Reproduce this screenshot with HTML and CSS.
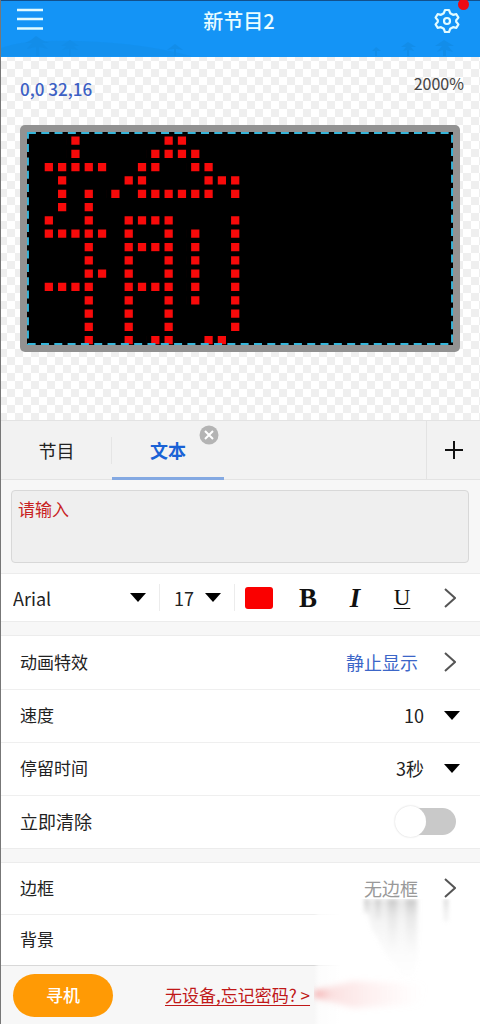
FILE: index.html
```html
<!DOCTYPE html>
<html lang="zh-CN">
<head>
<meta charset="utf-8">
<meta name="viewport" content="width=device-width, initial-scale=1">
<title>新节目2</title>
<link rel="stylesheet" href="styles.css">
</head>
<body>
<div class="app">
  <header class="header">
    <svg class="scenery scenery-left" width="200" height="24" viewBox="0 0 200 24" aria-hidden="true">
      <path d="M0 15Q20 8 45 8Q125 6 190 23H0z" opacity=".6"/>
      <path d="M35 23v-9l-9 2 5-6-7 0 6-3 5-4 6 4 7 3h-7l6 6-9-2v9zM68 23v-7l-7 1 4-4-5 0 9-6 9 6h-5l4 4-7-1v7zM166 17l8-6 8 6-7-1v7h-2v-7z"/>
    </svg>
    <svg class="scenery scenery-right" width="120" height="24" viewBox="0 0 120 24" aria-hidden="true">
      <path d="M12 18l4-4 5 4-4 0v5h-2v-5zM43 18l3-4-5 0 7-5 8 5h-5l3 4-5-1v6h-2v-6zM77 19l5-6-7 0 9-6 10 6h-6l5 6-7-2v6h-3v-6z"/>
    </svg>
    <button class="icon-button" type="button" aria-label="菜单">
      <svg width="28" height="24" viewBox="0 0 28 24"><path d="M1 2h26M1 11h26M1 20.500h26" fill="none" stroke="#e2fbff" stroke-width="2.400"/></svg>
    </button>
    <h1 class="title">新节目2</h1>
    <button class="icon-button settings" type="button" aria-label="设置">
      <svg width="26" height="26" viewBox="0 0 26 26" fill="none" stroke="#e2fbff" stroke-width="2.200" stroke-linejoin="round"><path d="M11 2h4l1.200 3.200 2.800 1.600 3.400-.6 2 3.400-2.200 2.700v1.400l2.200 2.700-2 3.400-3.400-.6-2.800 1.600L15 24h-4l-1.200-3.200L7 19.200l-3.400.6-2-3.400 2.200-2.700v-1.400L1.600 9.600l2-3.400 3.400.6 2.800-1.600z"/><circle cx="13" cy="13" r="3"/></svg>
      <span class="badge"></span>
    </button>
  </header>

  <main class="main">
    <section class="stage">
      <div class="stage-info">
        <span class="region">0,0 32,16</span>
        <span class="scale">2000%</span>
      </div>
      <div class="panel">
        <svg class="matrix" viewBox="0 0 32 16" role="img" aria-label="输">
          <rect width="32" height="16" fill="#000"/>
          <path fill="#f80a0a" d="M3 0h1v2h-1zM10 0h2v1h-2zM9 1h4v1h-4zM1 2h5v1h-5zM8 2h2v1h-2zM12 2h2v1h-2zM2 3h1v3h-1zM7 3h2v1h-2zM13 3h3v1h-3zM4 4h1v3h-1zM6 4h1v1h-1zM8 4h6v1h-6zM15 4h1v1h-1zM1 6h1v1h-1zM7 6h4v1h-4zM15 6h1v9h-1zM1 7h5v1h-5zM7 7h1v9h-1zM10 7h1v9h-1zM12 7h1v6h-1zM4 8h1v8h-1zM8 8h2v1h-2zM5 10h1v1h-1zM1 11h3v1h-3zM8 11h2v1h-2zM9 15h1v1h-1zM13 15h2v1h-2z"/>
          <path d="M0 8h32" stroke="#000" stroke-width="16" stroke-dasharray=".38 .62" stroke-dashoffset=".05"/>
          <path d="M16 0v16" stroke="#000" stroke-width="32" stroke-dasharray=".38 .62" stroke-dashoffset=".05"/>
          <rect x=".07" y=".07" width="31.860" height="15.860" fill="none" stroke="#35b5da" stroke-width=".15" stroke-dasharray=".6 .4"/>
        </svg>
      </div>
    </section>

    <nav class="tabs">
      <button class="tab" type="button">节目</button>
      <div class="tab-active">
        <button class="tab tab-current" type="button" aria-current="true">文本</button>
        <button class="tab-close" type="button" aria-label="关闭">
          <svg width="20" height="20" viewBox="0 0 20 20"><circle cx="10" cy="10" r="9.500" fill="#b4b4b4"/><path d="M6 6l8 8M14 6l-8 8" stroke="#fff" stroke-width="2"/></svg>
        </button>
      </div>
      <button class="tab-add" type="button" aria-label="添加">
        <svg width="18" height="18" viewBox="0 0 18 18"><path d="M9 0v18M0 9h18" stroke="#111" stroke-width="2"/></svg>
      </button>
    </nav>

    <section class="editor"><textarea class="editor-text" placeholder="请输入" aria-label="文本内容"></textarea></section>

    <section class="toolbar">
      <label class="picker picker-font">
        <select class="select" aria-label="字体"><option>Arial</option></select>
        <svg class="arrow" width="16" height="9" viewBox="0 0 16 9"><path d="M0 0h16L8 9z"/></svg>
      </label>
      <label class="picker picker-size">
        <select class="select" aria-label="字号"><option>17</option></select>
        <svg class="arrow" width="16" height="9" viewBox="0 0 16 9"><path d="M0 0h16L8 9z"/></svg>
      </label>
      <div class="styles">
        <button class="swatch" type="button" aria-label="颜色"></button>
        <button class="style-button bold" type="button">B</button>
        <button class="style-button italic" type="button">I</button>
        <button class="style-button underline" type="button">U</button>
        <button class="chevron-button" type="button" aria-label="更多">
          <svg class="chevron" width="12" height="20" viewBox="0 0 12 20"><path d="M1 1l10 9-10 9"/></svg>
        </button>
      </div>
    </section>

    <section class="group">
      <button class="row" type="button">
        <span class="label">动画特效</span><span class="value value-link">静止显示</span>
        <svg class="chevron" width="12" height="20" viewBox="0 0 12 20"><path d="M1 1l10 9-10 9"/></svg>
      </button>
      <div class="row row-select">
        <label class="label" for="speed">速度</label>
        <select class="select select-right" id="speed"><option>10</option></select>
        <svg class="arrow" width="16" height="9" viewBox="0 0 16 9"><path d="M0 0h16L8 9z"/></svg>
      </div>
      <div class="row row-select">
        <label class="label" for="stay">停留时间</label>
        <select class="select select-right" id="stay"><option>3秒</option></select>
        <svg class="arrow" width="16" height="9" viewBox="0 0 16 9"><path d="M0 0h16L8 9z"/></svg>
      </div>
      <div class="row">
        <label class="label label-large" for="clear">立即清除</label>
        <input class="switch" id="clear" type="checkbox" role="switch">
      </div>
    </section>

    <section class="group group-last">
      <button class="row" type="button">
        <span class="label">边框</span><span class="value value-muted">无边框</span>
        <svg class="chevron" width="12" height="20" viewBox="0 0 12 20"><path d="M1 1l10 9-10 9"/></svg>
      </button>
      <button class="row" type="button"><span class="label">背景</span></button>
    </section>
  </main>

  <footer class="footer">
    <button class="find" type="button">寻机</button>
    <a class="help" href="#">无设备,忘记密码? &gt;</a>
  </footer>

  <svg class="haze" width="166" height="126" viewBox="0 0 166 126" aria-hidden="true">
    <defs>
      <linearGradient id="cover" x1="0" x2="1"><stop offset="0" stop-color="#fff" stop-opacity="0"/><stop offset=".03" stop-color="#fff" stop-opacity=".7"/><stop offset=".16" stop-color="#fff"/></linearGradient>
      <linearGradient id="streak" x1="0" y1="0" x2="0" y2="1"><stop offset="0" stop-color="#aaa" stop-opacity=".5"/><stop offset=".3" stop-color="#ccc" stop-opacity=".3"/><stop offset="1" stop-color="#ddd" stop-opacity="0"/></linearGradient>
      <linearGradient id="rose" x1="0" x2="1"><stop offset="0" stop-color="#e77" stop-opacity=".65"/><stop offset=".15" stop-color="#f7bcbc" stop-opacity=".45"/><stop offset="1" stop-color="#fcdada" stop-opacity="0"/></linearGradient>
      <filter id="soft" x="-20%" y="-20%" width="140%" height="140%"><feGaussianBlur stdDeviation="2"/></filter>
      <filter id="softer" x="-20%" y="-50%" width="140%" height="200%"><feGaussianBlur stdDeviation="3"/></filter>
    </defs>
    <path d="M0 4h166v122H0z" fill="url(#cover)"/>
    <g filter="url(#soft)">
      <path d="M50 0h54v60l-8 26L72 55 58 30z" fill="url(#streak)" opacity=".6"/>
      <path d="M50 0h4v14h-4zM62 0h4v20h-4zM74 0h9v50h-9zM92 0h10v55h-10zM130 0h4v22h-4z" fill="url(#streak)"/>
    </g>
    <path d="M0 92L40 82 112 86 106 105 40 109 0 98z" fill="url(#rose)" filter="url(#softer)"/>
  </svg>
</div>
</body>
</html>
```
FILE: styles.css
```css
* {
  box-sizing: border-box;
}

body {
  margin: 0;
  background: #f7f7f7;
  color: #222;
  font: 17px/24px "Noto Sans CJK SC", sans-serif;
}

button,
select,
textarea {
  margin: 0;
  padding: 0;
  border: 0;
  background: none;
  color: inherit;
  font: inherit;
}

svg {
  display: block;
  flex: none;
}

.app {
  position: relative;
  display: flex;
  flex-direction: column;
  min-height: 100vh;
  border-left: 1px solid #777;
}

.header {
  position: relative;
  display: flex;
  align-items: flex-start;
  justify-content: space-between;
  height: 57px;
  padding: 7px 20px 0 15px;
  border-top: 1px solid #12508c;
  background: #1494f6;
}

.scenery {
  position: absolute;
  bottom: 0;
  fill: #128de9;
}

.scenery-left {
  left: 0;
}

.scenery-right {
  right: 0;
}

.icon-button {
  position: relative;
}

.title {
  position: relative;
  margin: 0;
  color: #e8fcff;
  font-size: 20px;
  font-weight: 500;
  line-height: 26px;
}

.badge {
  position: absolute;
  top: -9px;
  right: -9px;
  width: 11px;
  height: 11px;
  border-radius: 50%;
  background: #ee0a14;
}

.main {
  flex: 1;
}

.stage {
  padding: 16px 20px 68px 19px;
  background: repeating-conic-gradient(#efefef 0 25%, #fff 0 50%) 6px 4px / 16px 16px;
}

.stage-info {
  display: flex;
  justify-content: space-between;
  align-items: flex-start;
  height: 52px;
}

.region {
  padding-top: 4px;
  color: #3c60c4;
  font-weight: 500;
}

.scale {
  margin-right: -4px;
  color: #444;
  font-size: 16px;
  line-height: 20px;
}

.panel {
  padding: 7px;
  border-radius: 5px;
  background: #929292;
}

.matrix {
  width: 100%;
}

.tabs {
  display: flex;
  height: 60px;
  border: 1px solid #e3e3e3;
  border-width: 1px 0;
  background: #f2f2f2;
  font-size: 18px;
}

.tab {
  width: 111px;
}

.tab-active {
  position: relative;
  display: flex;
  margin-bottom: -1px;
}

.tab-active::before {
  content: "";
  position: absolute;
  top: 16px;
  left: -1px;
  height: 27px;
  border-left: 1px solid #e5e5e5;
}

.tab-current {
  width: 112px;
  padding-top: 2px;
  border-bottom: 3px solid #84a9e2;
  color: #1a62d6;
  font-weight: 700;
}

.tab-close {
  position: absolute;
  top: 4px;
  right: 5px;
}

.tab-add {
  display: grid;
  place-items: center;
  width: 54px;
  margin-left: auto;
  border-left: 1px solid #e3e3e3;
}

.editor {
  padding: 10px 11px 10px 10px;
}

.editor-text {
  display: block;
  width: 100%;
  height: 73px;
  padding: 6px;
  border: 1px solid #d8d8d8;
  border-radius: 4px;
  background: #efefef;
  resize: none;
}

.editor-text::placeholder {
  color: #c82222;
  opacity: 1;
}

.toolbar {
  display: flex;
  align-items: center;
  height: 49px;
  border: 1px solid #ececec;
  border-width: 1px 0;
  background: #fff;
  font-size: 18px;
}

.picker {
  display: flex;
  align-items: center;
  justify-content: space-between;
  height: 27px;
  padding-right: 13px;
  border-right: 1px solid #ececec;
}

.picker-font {
  width: 159px;
  padding-left: 12px;
}

.picker-size {
  width: 75px;
  padding-left: 14px;
}

.select {
  appearance: none;
  outline: 0;
}

.arrow {
  fill: #000;
  pointer-events: none;
}

.styles {
  flex: 1;
  display: flex;
  align-items: center;
  gap: 23px;
  padding: 0 24px 0 10px;
}

.swatch {
  width: 28px;
  height: 22px;
  border-radius: 3px;
  background: #fa0000;
}

.style-button {
  width: 24px;
  color: #111;
  font: 700 27px/28px "Liberation Serif", serif;
}

.italic {
  font-style: italic;
}

.underline {
  font-size: 23px;
  font-weight: 400;
  text-decoration: underline;
  text-decoration-thickness: 1px;
  text-underline-offset: 3px;
}

.chevron-button {
  margin-left: auto;
}

.chevron {
  fill: none;
  stroke: #555;
  stroke-width: 2;
}

.group {
  margin-top: 13px;
  border: 1px solid #ececec;
  border-width: 1px 0;
  background: #fff;
}

.row {
  display: flex;
  align-items: center;
  width: 100%;
  height: 53px;
  padding: 0 24px 2px 19px;
  text-align: left;
}

.row + .row {
  border-top: 1px solid #efefef;
}

.row-select {
  padding-right: 20px;
}

.group-last {
  border-bottom: 0;
}

.group-last .row {
  height: 51px;
}

.label {
  flex: 1;
}

.label-large,
.value {
  font-size: 18px;
}

.value {
  margin-right: 26px;
}

.value-link {
  color: #3c66c8;
}

.value-muted {
  color: #999;
}

.select-right {
  margin-right: 20px;
  font-size: 18px;
}

.switch {
  appearance: none;
  position: relative;
  width: 57px;
  height: 27px;
  margin: 0;
  border-radius: 14px;
  background: #c9c9c9;
}

.switch::before {
  content: "";
  position: absolute;
  top: -2px;
  left: -4px;
  width: 31px;
  height: 31px;
  border-radius: 50%;
  background: #fff;
  box-shadow: 0 0 2px #ccc;
}

.switch:checked {
  background: #1494f6;
}

.switch:checked::before {
  left: 26px;
}

.footer {
  display: flex;
  align-items: center;
  gap: 52px;
  height: 60px;
  padding-left: 12px;
  border: 1px solid #d8d8d8;
  border-width: 1px 0;
  background: #f7f7f7;
}

.find {
  width: 100px;
  height: 43px;
  border-radius: 22px;
  background: #ff9a05;
  color: #fff;
  font-weight: 500;
}

.help {
  color: #c01818;
  text-underline-offset: 3px;
}

.haze {
  position: absolute;
  right: 0;
  bottom: 0;
  pointer-events: none;
}
```
